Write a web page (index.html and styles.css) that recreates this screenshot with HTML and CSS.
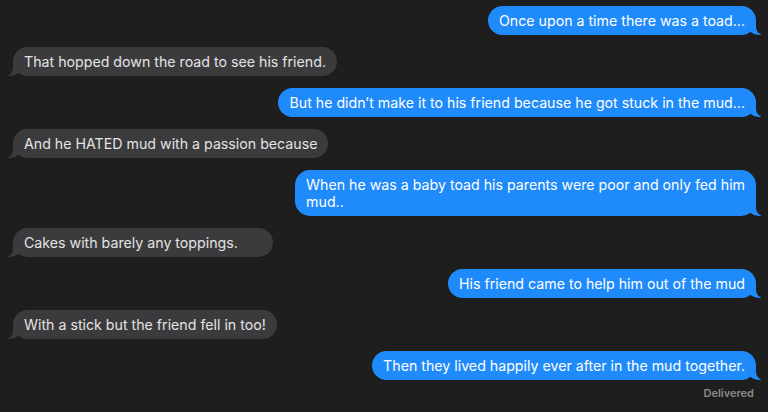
FILE: index.html
```html
<!DOCTYPE html>
<html lang="en">
<head>
<meta charset="utf-8">
<title>Messages</title>
<link rel="stylesheet" href="styles.css">
</head>
<body>
<main class="thread">
  <div class="msg sent">Once upon a time there was a toad...</div>
  <div class="msg recv">That hopped down the road to see his friend.</div>
  <div class="msg sent">But he didn’t make it to his friend because he got stuck in the mud...</div>
  <div class="msg recv">And he HATED mud with a passion because</div>
  <div class="msg sent">When he was a baby toad his parents were poor and only fed him<br>mud..</div>
  <div class="msg recv trailing">Cakes with barely any toppings.</div>
  <div class="msg sent">His friend came to help him out of the mud</div>
  <div class="msg recv">With a stick but the friend fell in too!</div>
  <div class="msg sent last">Then they lived happily ever after in the mud together.</div>
  <div class="status">Delivered</div>
</main>
</body>
</html>
```

FILE: styles.css
```css
html, body {
  margin: 0;
  padding: 0;
  background: #1e1e1e;
  height: 100%;
  overflow: hidden;
}

.thread {
  display: flex;
  flex-direction: column;
  gap: 12px;
  padding: 6px 12px 0 13px;
  font-family: "Inter", "Liberation Sans", sans-serif;
  font-size: 14.2px;
  line-height: 17px;
}

.msg {
  position: relative;
  z-index: 0;
  max-width: 510px;
  padding: 6px 11px;
  border-radius: 15px;
  box-sizing: border-box;
}

.sent {
  align-self: flex-end;
  background: #1f8afa;
  color: #ffffff;
}

.recv {
  align-self: flex-start;
  background: #3b3b3d;
  color: #e3e3e3;
}

.recv.trailing {
  padding-right: 35px;
}

.msg::before,
.msg::after {
  content: "";
  position: absolute;
  bottom: 0;
  height: 14px;
  z-index: -1;
}

.sent::before {
  right: -5px;
  width: 14px;
  background: #1f8afa;
  border-bottom-left-radius: 12px 10px;
}

.sent::after {
  right: -18px;
  width: 18px;
  background: #1e1e1e;
  border-bottom-left-radius: 8px;
}

.recv::before {
  left: -5px;
  width: 14px;
  background: #3b3b3d;
  border-bottom-right-radius: 12px 10px;
}

.recv::after {
  left: -18px;
  width: 18px;
  background: #1e1e1e;
  border-bottom-right-radius: 8px;
}

.status {
  align-self: flex-end;
  margin-top: -6px;
  margin-right: 2px;
  font-size: 11px;
  line-height: 14px;
  font-weight: 600;
  color: #8a8a8a;
}
```
